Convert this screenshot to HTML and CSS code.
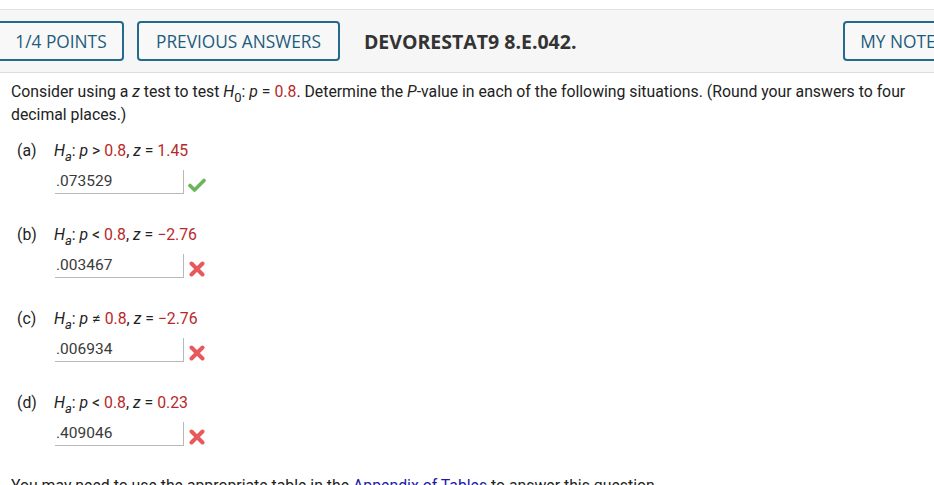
FILE: index.html
```html
<!DOCTYPE html>
<html>
<head>
<meta charset="utf-8">
<link rel="stylesheet" href="styles.css">
</head>
<body>
<div class="page">
  <div class="header">
    <div class="btn btn-first">1/4 POINTS</div>
    <div class="btn">PREVIOUS ANSWERS</div>
    <div class="title">DEVORESTAT9 8.E.042.</div>
    <div class="btn btn-notes">MY NOTES</div>
  </div>
  <div class="content">
    <p class="intro">Consider using a <i>z</i> test to test <i>H</i><sub>0</sub>: <i>p</i> = <span class="red">0.8</span>. Determine the <i>P</i>-value in each of the following situations. (Round your answers to four decimal places.)</p>

    <div class="part">
      <div class="qline"><span class="lbl">(a)</span><span><i>H</i><sub><i>a</i></sub>: <i>p</i> &gt; <span class="red">0.8</span>, <i>z</i> = <span class="red">1.45</span></span></div>
      <div class="answer"><div class="box">.073529</div>
        <svg class="icon" width="18" height="16" viewBox="0 0 18 16"><path d="M2 8.5 L6.5 13 L16 3.5" fill="none" stroke="#6ab45a" stroke-width="3.6" stroke-linecap="round" stroke-linejoin="round"/></svg>
      </div>
    </div>

    <div class="part">
      <div class="qline"><span class="lbl">(b)</span><span><i>H</i><sub><i>a</i></sub>: <i>p</i> &lt; <span class="red">0.8</span>, <i>z</i> = <span class="red">&minus;2.76</span></span></div>
      <div class="answer"><div class="box">.003467</div>
        <svg class="icon" width="18" height="16" viewBox="0 0 18 16"><path d="M3.5 2.5 L14.5 13.5 M14.5 2.5 L3.5 13.5" fill="none" stroke="#e65a5c" stroke-width="4" stroke-linecap="round"/></svg>
      </div>
    </div>

    <div class="part">
      <div class="qline"><span class="lbl">(c)</span><span><i>H</i><sub><i>a</i></sub>: <i>p</i> &ne; <span class="red">0.8</span>, <i>z</i> = <span class="red">&minus;2.76</span></span></div>
      <div class="answer"><div class="box">.006934</div>
        <svg class="icon" width="18" height="16" viewBox="0 0 18 16"><path d="M3.5 2.5 L14.5 13.5 M14.5 2.5 L3.5 13.5" fill="none" stroke="#e65a5c" stroke-width="4" stroke-linecap="round"/></svg>
      </div>
    </div>

    <div class="part">
      <div class="qline"><span class="lbl">(d)</span><span><i>H</i><sub><i>a</i></sub>: <i>p</i> &lt; <span class="red">0.8</span>, <i>z</i> = <span class="red">0.23</span></span></div>
      <div class="answer"><div class="box">.409046</div>
        <svg class="icon" width="18" height="16" viewBox="0 0 18 16"><path d="M3.5 2.5 L14.5 13.5 M14.5 2.5 L3.5 13.5" fill="none" stroke="#e65a5c" stroke-width="4" stroke-linecap="round"/></svg>
      </div>
    </div>

    <p class="note">You may need to use the appropriate table in the <a href="#">Appendix of Tables</a> to answer this question.</p>
  </div>
</div>
</body>
</html>
```
FILE: styles.css
```css
html, body {
  margin: 0;
  padding: 0;
  background: #ffffff;
  overflow: hidden;
}
.page {
  width: 934px;
  height: 485px;
  overflow: hidden;
  padding-top: 9px;
  box-sizing: border-box;
}
.header {
  display: flex;
  align-items: center;
  width: 962px;
  height: 64px;
  box-sizing: border-box;
  background: #f6f6f6;
  border-top: 1px solid #e2e2e2;
  border-bottom: 1px solid #dcdcdc;
  font-family: "Open Sans", "Liberation Sans", sans-serif;
  white-space: nowrap;
}
.btn {
  height: 40px;
  box-sizing: border-box;
  border: 2px solid #246a8c;
  border-radius: 4px;
  color: #1d5c7d;
  font-size: 17.3px;
  display: flex;
  align-items: center;
  padding: 0 17px;
  background: #f8f8f8;
  flex-shrink: 0;
}
.btn-first {
  margin-left: -4px;
  width: 128px;
  padding: 0 0 0 2px;
  justify-content: center;
}
.btn + .btn {
  margin-left: 13px;
}
.title {
  margin-left: 24px;
  font-weight: 700;
  font-size: 19.5px;
  color: #333333;
  flex: 1;
}
.btn-notes {
  padding: 0 15px;
}
.content {
  font-family: Roboto, "Liberation Sans", sans-serif;
  font-size: 15.8px;
  color: #222222;
  padding-left: 11px;
}
.intro {
  margin: 7px 0 0 0;
  line-height: 23px;
  width: 910px;
}
sub {
  font-size: 13px;
  vertical-align: -5px;
  line-height: 0;
}
.red {
  color: #b8282a;
}
.part {
  margin-top: 14px;
  margin-bottom: 30px;
}
.qline {
  display: flex;
  line-height: 22px;
  padding-left: 6px;
}
.lbl {
  width: 37px;
}
.answer {
  display: flex;
  align-items: center;
  margin-top: 8px;
  margin-left: 44px;
}
.box {
  width: 129px;
  height: 24px;
  box-sizing: border-box;
  border-right: 1px solid #b9b9b9;
  border-bottom: 1px solid #b9b9b9;
  font-size: 15.5px;
  color: #3a3a3a;
  line-height: 22px;
  padding-left: 1px;
}
.icon {
  margin-left: 4px;
  margin-top: 6px;
}
.note {
  margin: 13px 0 0 0;
}
.note a {
  color: #1a1aa6;
  text-decoration: none;
}
```
